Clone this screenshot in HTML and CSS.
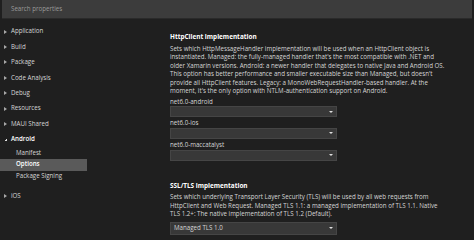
FILE: index.html
```html
<!DOCTYPE html>
<html lang="en">
<head>
  <meta charset="UTF-8" />
  <title>Project Properties</title>
  <link rel="stylesheet" href="styles.css">
</head>
<body>

  <header class="search-bar">
    <span class="search-placeholder">Search properties</span>
  </header>

  <div class="layout">
    <nav class="sidebar">
      <div class="nav-item"><i class="caret"></i>Application</div>
      <div class="nav-item"><i class="caret"></i>Build</div>
      <div class="nav-item"><i class="caret"></i>Package</div>
      <div class="nav-item"><i class="caret"></i>Code Analysis</div>
      <div class="nav-item"><i class="caret"></i>Debug</div>
      <div class="nav-item"><i class="caret"></i>Resources</div>
      <div class="nav-item"><i class="caret"></i>MAUI Shared</div>
      <div class="nav-item expanded"><i class="caret open"></i>Android</div>
      <div class="nav-children">
        <div class="nav-child">Manifest</div>
        <div class="nav-child selected">Options</div>
        <div class="nav-child">Package Signing</div>
      </div>
      <div class="nav-item"><i class="caret"></i>iOS</div>
    </nav>

    <main class="content">
      <section class="setting">
        <h2>HttpClient implementation</h2>
        <p class="desc">Sets which HttpMessageHandler implementation will be used when an HttpClient object is instantiated. Managed: the fully-managed handler that's the most compatible with .NET and older Xamarin versions. Android: a newer handler that delegates to native Java and Android OS. This option has better performance and smaller executable size than Managed, but doesn't provide all HttpClient features. Legacy: a MonoWebRequestHandler-based handler. At the moment, it's the only option with NTLM-authentication support on Android.</p>

        <label class="field-label">net6.0-android</label>
        <div class="select"><span></span><i class="arrow"></i></div>

        <label class="field-label">net6.0-ios</label>
        <div class="select"><span></span><i class="arrow"></i></div>

        <label class="field-label">net6.0-maccatalyst</label>
        <div class="select"><span></span><i class="arrow"></i></div>
      </section>

      <section class="setting tls">
        <h2>SSL/TLS implementation</h2>
        <p class="desc">Sets which underlying Transport Layer Security (TLS) will be used by all web requests from HttpClient and Web Request. Managed TLS 1.1: a managed implementation of TLS 1.1. Native TLS 1.2+: The native implementation of TLS 1.2 (Default).</p>
        <div class="select"><span>Managed TLS 1.0</span><i class="arrow"></i></div>
      </section>
    </main>
  </div>

</body>
</html>
```

FILE: styles.css
```css
:root {
  --bg: #1f1f1f;
  --search-bg: #3c3c3c;
  --text: #d6d6d6;
  --muted: #9a9a9a;
  --heading: #ffffff;
  --select-bg: #383838;
  --select-border: #454545;
  --selected-bg: #5a5a5a;
}

* {
  box-sizing: border-box;
  margin: 0;
  padding: 0;
}

html, body {
  height: 100%;
}

body {
  background-color: var(--bg);
  color: var(--text);
  font-family: "Open Sans", "Noto Sans", sans-serif;
  font-size: 6.2px;
  line-height: 8.5px;
  overflow: hidden;
}

.search-bar {
  height: 19px;
  margin-left: 2px;
  margin-right: 2px;
  background-color: var(--search-bg);
  border-bottom: 1px solid #2a2a2a;
  display: flex;
  align-items: center;
  padding-left: 9px;
}

.search-placeholder {
  color: var(--muted);
}

.layout {
  display: flex;
}

/* left navigation tree */
.sidebar {
  width: 87px;
  flex-shrink: 0;
  padding-top: 5px;
}

.nav-item {
  height: 15.4px;
  display: flex;
  align-items: center;
  padding-left: 4px;
  color: var(--text);
}

.nav-item.expanded {
  color: #ffffff;
  font-weight: 600;
}

.caret {
  width: 0;
  height: 0;
  border-left: 3px solid #a8a8a8;
  border-top: 2.5px solid transparent;
  border-bottom: 2.5px solid transparent;
  margin-right: 4px;
}

.caret.open {
  border: none;
  width: 3px;
  height: 3px;
  background: linear-gradient(135deg, transparent 50%, #e0e0e0 50%);
  margin-right: 4px;
}

.nav-children {
  padding-bottom: 6px;
}

.nav-child {
  height: 11.7px;
  display: flex;
  align-items: center;
  padding-left: 16px;
  color: var(--text);
}

.nav-child.selected {
  background-color: var(--selected-bg);
  color: #ffffff;
  font-weight: 600;
}

/* settings panel */
.content {
  flex: 1;
  padding-left: 83px;
  padding-top: 14px;
}

.setting {
  width: 279px;
}

.setting h2 {
  font-size: 6.4px;
  font-weight: 700;
  color: var(--heading);
  line-height: 8.5px;
  margin-bottom: 3px;
}

.desc {
  margin-bottom: 2px;
}

.field-label {
  display: block;
}

.select {
  width: 167px;
  height: 11px;
  background-color: var(--select-bg);
  border: 1px solid var(--select-border);
  display: flex;
  align-items: center;
  justify-content: space-between;
  padding: 0 3px;
  margin-bottom: 2.4px;
  color: var(--text);
}

.arrow {
  width: 0;
  height: 0;
  border-top: 2px solid #e0e0e0;
  border-left: 2px solid transparent;
  border-right: 2px solid transparent;
}

.tls {
  margin-top: 21px;
}

.tls .select {
  height: 13px;
  margin-top: 3px;
}
```
